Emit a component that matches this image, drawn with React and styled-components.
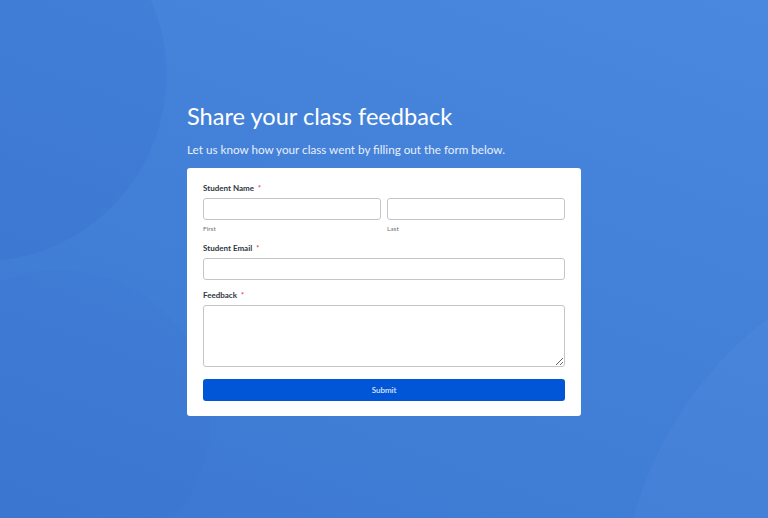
import styled, { createGlobalStyle } from "styled-components";

const GlobalStyle = createGlobalStyle`
  * {
    box-sizing: border-box;
  }

  body {
    margin: 0;
    font-family: 'Lato', 'Noto Sans', sans-serif;
  }
`;

const Page = styled.main`
  min-height: 100vh;
  display: flex;
  justify-content: center;
  padding-top: 101px;
  background-color: #427fd7;
  background-image:
    radial-gradient(circle at -20px 75px, rgba(30, 80, 180, 0.1) 0 186px, transparent 187px),
    radial-gradient(circle at 60px 420px, rgba(30, 80, 180, 0.04) 0 150px, transparent 151px),
    radial-gradient(circle at 1000px 620px, rgba(255, 255, 255, 0.025) 0 380px, transparent 381px),
    linear-gradient(200deg, #4a88df 0%, #4381d9 45%, #3c78d1 100%);
`;

const Wrapper = styled.div`
  width: 394px;
  display: flex;
  flex-direction: column;
`;

const Title = styled.h1`
  margin: 0 0 10px;
  font-size: 23.6px;
  line-height: 30px;
  font-weight: 400;
  color: #ffffff;
`;

const Subtitle = styled.p`
  margin: 0 0 11px;
  font-size: 11.7px;
  line-height: 16px;
  color: #e8effb;
`;

const Card = styled.form`
  background: #ffffff;
  border-radius: 3px;
  padding: 15px 16px 15px;
  display: flex;
  flex-direction: column;
`;

const Field = styled.div`
  display: flex;
  flex-direction: column;
  margin-bottom: ${(p) => p.$gap || 10}px;
`;

const Label = styled.label`
  font-size: 8px;
  line-height: 11px;
  font-weight: 700;
  color: #2f3540;
  margin-bottom: 4px;
`;

const Required = styled.span`
  color: #e0483e;
  font-size: 7px;
  margin-left: 4px;
`;

const Row = styled.div`
  display: grid;
  grid-template-columns: 1fr 1fr;
  gap: 6px;
`;

const Column = styled.div`
  display: flex;
  flex-direction: column;
`;

const Input = styled.input`
  width: 100%;
  height: 22px;
  border: 1px solid #c3c5cb;
  border-radius: 3px;
  background: #ffffff;
  font-family: inherit;
  font-size: 9px;
  padding: 0 6px;
  outline: none;
`;

const TextArea = styled.textarea`
  width: 100%;
  height: 62px;
  border: 1px solid #c3c5cb;
  border-radius: 3px;
  background: #ffffff;
  font-family: inherit;
  font-size: 9px;
  padding: 5px 6px;
  outline: none;
  display: block;
`;

const SubLabel = styled.span`
  font-size: 6.5px;
  line-height: 9px;
  margin-top: 4px;
  color: #6e727a;
`;

const SubmitButton = styled.button`
  height: 22px;
  border: none;
  border-radius: 3px;
  background: #0056d6;
  color: #e9f0fc;
  font-family: inherit;
  font-size: 8px;
  font-weight: 500;
  cursor: pointer;
`;

function App() {
  return (
    <>
      <GlobalStyle />
      <Page>
        <Wrapper>
          <Title>Share your class feedback</Title>
          <Subtitle>Let us know how your class went by filling out the form below.</Subtitle>
          <Card onSubmit={(e) => e.preventDefault()}>
            <Field>
              <Label>
                Student Name<Required>*</Required>
              </Label>
              <Row>
                <Column>
                  <Input type="text" aria-label="First" />
                  <SubLabel>First</SubLabel>
                </Column>
                <Column>
                  <Input type="text" aria-label="Last" />
                  <SubLabel>Last</SubLabel>
                </Column>
              </Row>
            </Field>
            <Field>
              <Label>
                Student Email<Required>*</Required>
              </Label>
              <Input type="email" />
            </Field>
            <Field $gap={12}>
              <Label>
                Feedback<Required>*</Required>
              </Label>
              <TextArea />
            </Field>
            <SubmitButton type="submit">Submit</SubmitButton>
          </Card>
        </Wrapper>
      </Page>
    </>
  );
}

export default App;
